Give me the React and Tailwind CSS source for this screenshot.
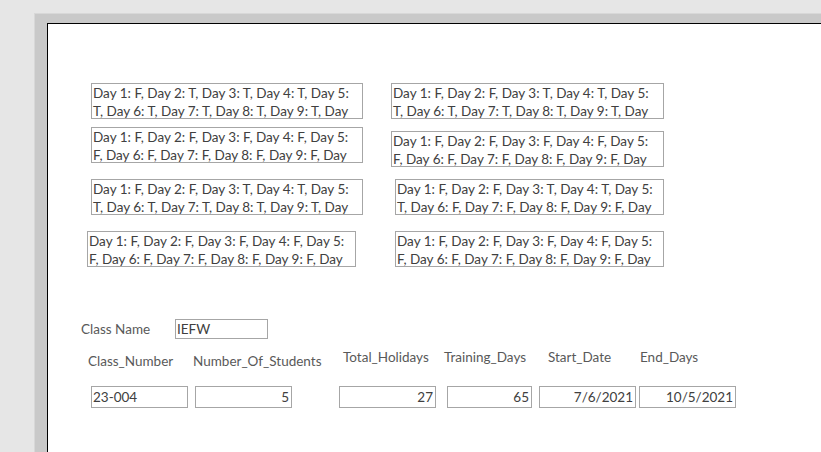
import React from "react";

const FONT = { fontFamily: "Lato, 'Open Sans', sans-serif" };

function DayBox({ lines, className }) {
  return (
    <div
      className={
        "h-[36px] border border-[#a6a6a6] overflow-hidden pl-[1px] text-[13.5px] leading-[18px] text-[#404040] whitespace-nowrap " +
        className
      }
    >
      <div>{lines[0]}</div>
      <div>{lines[1]}</div>
    </div>
  );
}

const TT1 = "Day 1: F, Day 2: T, Day 3: T, Day 4: T, Day 5:";
const TT2 = "T, Day 6: T, Day 7: T, Day 8: T, Day 9: T, Day";
const FF1 = "Day 1: F, Day 2: F, Day 3: F, Day 4: F, Day 5:";
const FF2 = "F, Day 6: F, Day 7: F, Day 8: F, Day 9: F, Day";
const FT1 = "Day 1: F, Day 2: F, Day 3: T, Day 4: T, Day 5:";
const TF2 = "T, Day 6: F, Day 7: F, Day 8: F, Day 9: F, Day";

function Field({ value, className, right }) {
  return (
    <div
      className={
        "h-[22px] border border-[#a6a6a6] flex items-center text-[13.5px] leading-[18px] text-[#404040] whitespace-nowrap " +
        (right ? "justify-end pr-[2px] " : "pl-[1px] ") +
        className
      }
    >
      {value}
    </div>
  );
}

export default function App() {
  return (
    <div className="w-[821px] h-[452px] bg-[#e6e6e6] overflow-hidden flex flex-col" style={FONT}>
      <div className="mt-[13px] ml-[34px] flex-1 flex bg-[#c9c9c9] border-t border-l border-[#d8d8d8] pt-[9px] pl-[12px]">
        <div className="flex-1 bg-white border-t border-l border-black flex flex-col">
          {/* Row 1 */}
          <div className="flex items-start mt-[59px]">
            <DayBox lines={[TT1, TT2]} className="ml-[43px] w-[272px]" />
            <DayBox lines={[FT1, TT2]} className="ml-[28px] w-[273px]" />
          </div>
          {/* Row 2 */}
          <div className="flex items-start mt-[8px]">
            <DayBox lines={[FF1, FF2]} className="ml-[43px] w-[272px]" />
            <DayBox lines={[FF1, FF2]} className="ml-[28px] mt-[4px] w-[273px]" />
          </div>
          {/* Row 3 */}
          <div className="flex items-start mt-[12px]">
            <DayBox lines={[FT1, TT2]} className="ml-[43px] w-[272px]" />
            <DayBox lines={[FT1, TF2]} className="ml-[32px] w-[269px]" />
          </div>
          {/* Row 4 */}
          <div className="flex items-start mt-[16px]">
            <DayBox lines={[FF1, FF2]} className="ml-[39px] w-[269px]" />
            <DayBox lines={[FF1, FF2]} className="ml-[39px] w-[269px]" />
          </div>

          {/* Class Name */}
          <div className="flex items-center mt-[52px] text-[13.5px] leading-[18px]">
            <div className="ml-[33px] w-[94px] text-[#595959]">Class Name</div>
            <div className="w-[93px] h-[20px] border border-[#a6a6a6] flex items-center pl-[1px] text-[#404040]">
              IEFW
            </div>
          </div>

          {/* Labels */}
          <div className="flex items-start mt-[9px] text-[13.5px] leading-[18px] text-[#595959] whitespace-nowrap">
            <div className="ml-[40px] w-[105px] mt-[4px]">Class_Number</div>
            <div className="w-[150px] mt-[4px]">Number_Of_Students</div>
            <div className="w-[101px]">Total_Holidays</div>
            <div className="w-[104px]">Training_Days</div>
            <div className="w-[92px]">Start_Date</div>
            <div>End_Days</div>
          </div>

          {/* Inputs */}
          <div className="flex items-start mt-[16px]">
            <Field value="23-004" className="ml-[43px] w-[97px]" />
            <Field value="5" right className="ml-[7px] w-[97px]" />
            <Field value="27" right className="ml-[47px] w-[97px]" />
            <Field value="65" right className="ml-[11px] w-[85px]" />
            <Field value="7/6/2021" right className="ml-[7px] w-[97px]" />
            <Field value="10/5/2021" right className="ml-[3px] w-[97px]" />
          </div>
        </div>
      </div>
    </div>
  );
}
